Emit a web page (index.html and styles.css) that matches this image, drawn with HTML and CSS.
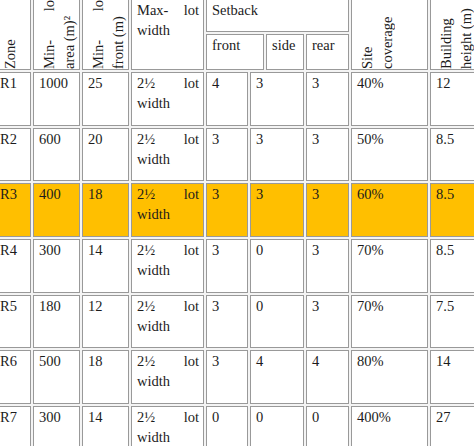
FILE: index.html
```html
<!DOCTYPE html>
<html lang="en">
<head>
<meta charset="utf-8">
<title>Zoning table</title>
<link rel="stylesheet" href="styles.css">
</head>
<body>
<div class="table">
  <div class="cell hd span-rows c1"><div class="rot">Zone</div></div>
  <div class="cell hd span-rows c2"><div class="rot tall">Min- lot area (m)²</div></div>
  <div class="cell hd span-rows c3"><div class="rot tall">Min- lot front (m)</div></div>
  <div class="cell hd span-rows c4 just">Max- lot width</div>
  <div class="cell hd setback">Setback</div>
  <div class="cell hd sub-front">front</div>
  <div class="cell hd sub-side">side</div>
  <div class="cell hd sub-rear">rear</div>
  <div class="cell hd span-rows c9"><div class="rot">Site coverage</div></div>
  <div class="cell hd span-rows c10"><div class="rot">Building height (m)</div></div>

  <div class="cell">R1</div><div class="cell">1000</div><div class="cell">25</div><div class="cell just">2½ lot width</div><div class="cell">4</div><div class="cell side">3</div><div class="cell">3</div><div class="cell">40%</div><div class="cell">12</div>

  <div class="cell">R2</div><div class="cell">600</div><div class="cell">20</div><div class="cell just">2½ lot width</div><div class="cell">3</div><div class="cell side">3</div><div class="cell">3</div><div class="cell">50%</div><div class="cell">8.5</div>

  <div class="cell hl">R3</div><div class="cell hl">400</div><div class="cell hl">18</div><div class="cell hl just">2½ lot width</div><div class="cell hl">3</div><div class="cell hl side">3</div><div class="cell hl">3</div><div class="cell hl">60%</div><div class="cell hl">8.5</div>

  <div class="cell">R4</div><div class="cell">300</div><div class="cell">14</div><div class="cell just">2½ lot width</div><div class="cell">3</div><div class="cell side">0</div><div class="cell">3</div><div class="cell">70%</div><div class="cell">8.5</div>

  <div class="cell">R5</div><div class="cell">180</div><div class="cell">12</div><div class="cell just">2½ lot width</div><div class="cell">3</div><div class="cell side">0</div><div class="cell">3</div><div class="cell">70%</div><div class="cell">7.5</div>

  <div class="cell">R6</div><div class="cell">500</div><div class="cell">18</div><div class="cell just">2½ lot width</div><div class="cell">3</div><div class="cell side">4</div><div class="cell">4</div><div class="cell">80%</div><div class="cell">14</div>

  <div class="cell">R7</div><div class="cell">300</div><div class="cell">14</div><div class="cell just">2½ lot width</div><div class="cell">0</div><div class="cell side">0</div><div class="cell">0</div><div class="cell">400%</div><div class="cell">27</div>
</div>
</body>
</html>
```

FILE: styles.css
```css
html, body {
  margin: 0;
  padding: 0;
  overflow: hidden;
  background: #f4f4f4;
}

body {
  width: 474px;
  height: 446px;
}

.table {
  display: grid;
  grid-template-columns: 37px 47px 47px 73px 42px 14px 38px 43px 77px 60px;
  grid-template-rows: 33px 36px repeat(7, 53.67px);
  gap: 2px;
  width: max-content;
  margin-left: -6px;
  margin-top: -1px;
  background: #f4f4f4;
  font-family: "Liberation Serif", "Times New Roman", serif;
  font-size: 14.5px;
  line-height: 20px;
  color: #1c1c1c;
}

.cell {
  border: 1px solid #999999;
  padding: 0 4px 0 5px;
  background: #ffffff;
  overflow: visible;
}

.hl {
  background: #ffbf00;
}

.just {
  text-align: justify;
}

.span-rows {
  grid-row: 1 / span 2;
}

.c1 { grid-column: 1; }
.c2 { grid-column: 2; }
.c3 { grid-column: 3; }
.c4 { grid-column: 4; }
.c9 { grid-column: 9; }
.c10 { grid-column: 10; }

.setback {
  grid-column: 5 / span 4;
  grid-row: 1;
}

.sub-front {
  grid-column: 5 / span 2;
  grid-row: 2;
}

.sub-side {
  grid-column: 7;
  grid-row: 2;
}

.sub-rear {
  grid-column: 8;
  grid-row: 2;
}

.side {
  grid-column: span 2;
}

.rot {
  writing-mode: vertical-rl;
  transform: rotate(180deg);
  height: 69px;
  width: 40px;
  text-align: justify;
}

.rot.tall {
  height: 73px;
  margin-top: -4px;
}
```
